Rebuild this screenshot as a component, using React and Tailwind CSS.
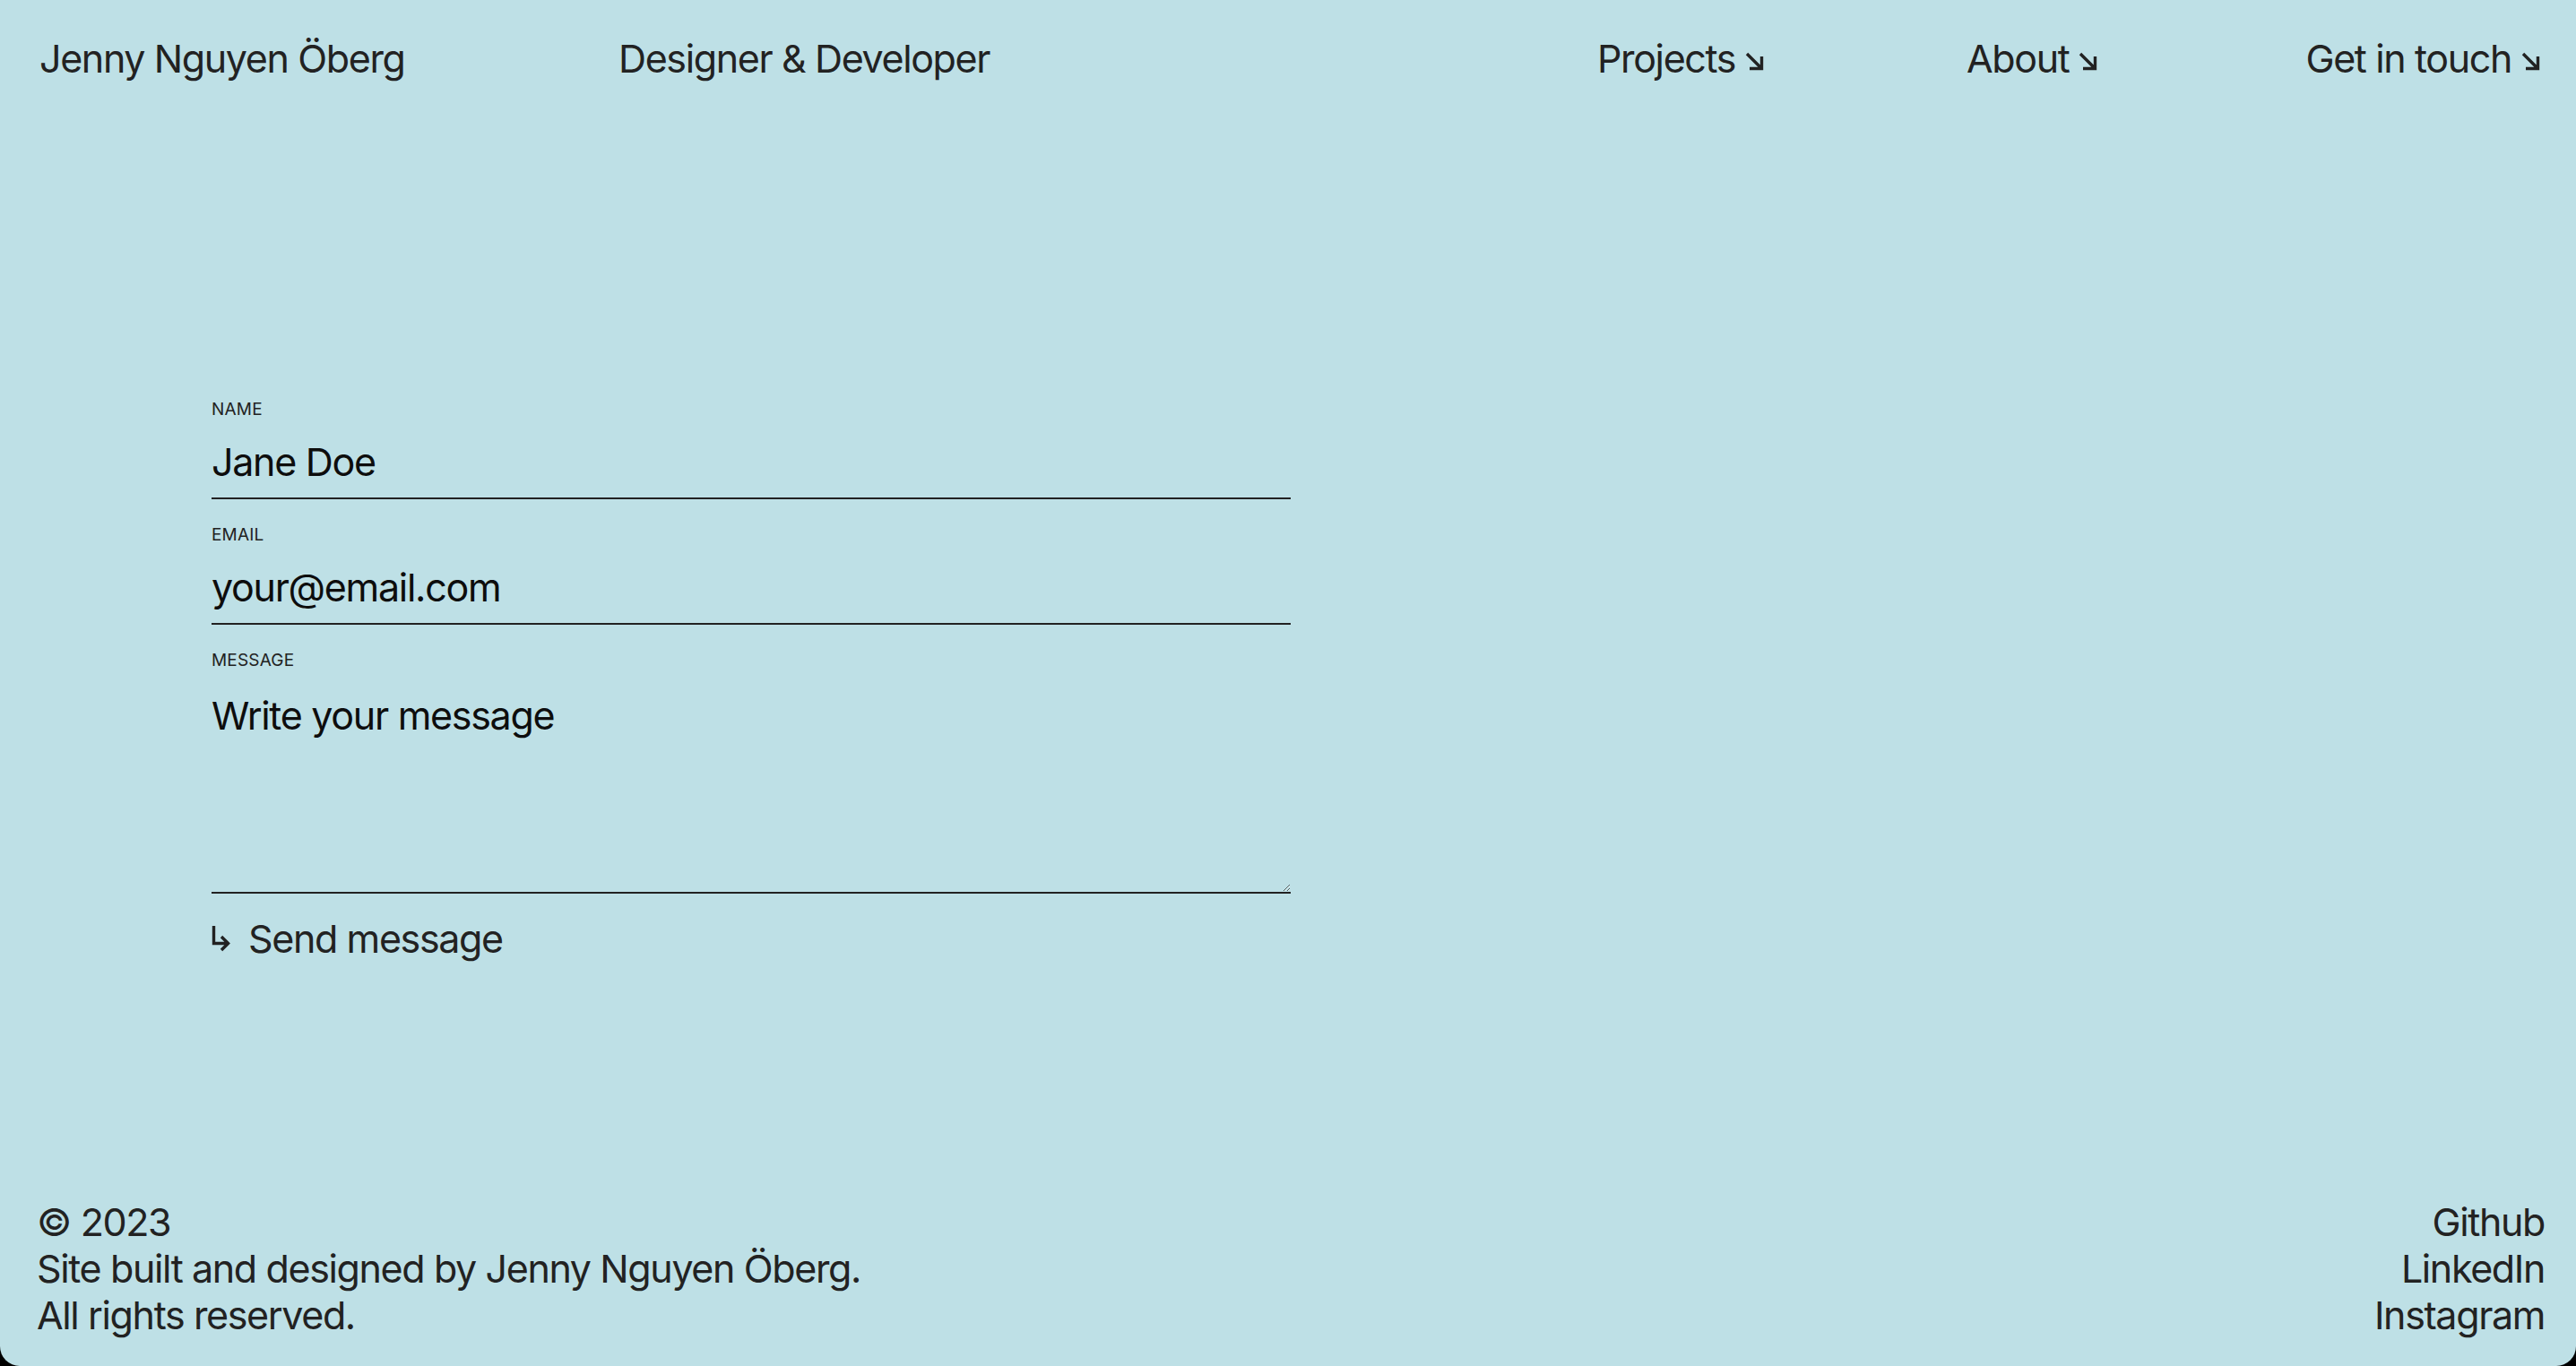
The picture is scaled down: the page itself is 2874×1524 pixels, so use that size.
import React from 'react';

// small diagonal arrow used after nav links
const ArrowDownRight = () => (
  <svg width="22" height="22" viewBox="0 0 22 22" fill="none" className="inline-block ml-[10px] mb-[2px]">
    <path d="M3 3 L18 18 M6 19.5 H19.5 V6" stroke="#222" strokeWidth="3.4" />
  </svg>
);

// hooked arrow in front of the submit button
const ReturnArrow = () => (
  <svg width="22" height="30" viewBox="0 0 22 30" fill="none" className="block mr-[19px] mb-[10px]">
    <path d="M2.5 0 V19.5 H18 M11 12 L18.5 19.5 L11 27" stroke="#222" strokeWidth="3.4" />
  </svg>
);

const Field = ({ label, children }) => (
  <label className="flex flex-col">
    <span className="text-[19px] leading-[23px] uppercase tracking-[0.01em] text-[#222]">{label}</span>
    {children}
  </label>
);

const inputClass =
  'mt-[21px] pb-[14px] bg-transparent border-b-2 border-[#222] outline-none placeholder:text-[#0d0d0d] leading-[52px] tracking-[-0.03em]';

export default function App() {
  return (
    <div className="bg-black">
      <div className="min-h-screen flex flex-col bg-[#bee0e6] text-[#222] rounded-b-[22px] font-['Inter','Liberation_Sans',sans-serif] text-[43px] leading-[52px] tracking-[-0.032em]">
        <header className="grid grid-cols-[646px_1092px_412px_1fr] pl-[44px] pr-[40px] pt-[39px]">
          <span>Jenny Nguyen Öberg</span>
          <span>Designer &amp; Developer</span>
          <a href="#projects">Projects<ArrowDownRight /></a>
          <div className="flex justify-between">
            <a href="#about">About<ArrowDownRight /></a>
            <a href="#contact">Get in touch<ArrowDownRight /></a>
          </div>
        </header>

        <main className="pl-[236px] pt-[354px]">
          <form className="w-[1204px] flex flex-col gap-[28px]" onSubmit={(e) => e.preventDefault()}>
            <Field label="Name">
              <input type="text" placeholder="Jane Doe" className={inputClass} />
            </Field>
            <Field label="Email">
              <input type="email" placeholder="your@email.com" className={inputClass} />
            </Field>
            <Field label="Message">
              <textarea
                placeholder="Write your message"
                className="mt-[21px] pt-[3px] h-[228px] bg-transparent border-b-2 border-[#222] outline-none placeholder:text-[#0d0d0d] leading-[52px] tracking-[-0.03em]"
              />
            </Field>
            <button type="submit" className="self-start mt-[-4px] flex items-end text-left leading-[52px] tracking-[-0.032em] cursor-pointer">
              <ReturnArrow />
              Send message
            </button>
          </form>
        </main>

        <footer className="mt-auto flex justify-between items-end pl-[41px] pr-[35px] pb-[31px]">
          <div>
            <p>© 2023</p>
            <p>Site built and designed by Jenny Nguyen Öberg.</p>
            <p>All rights reserved.</p>
          </div>
          <div className="flex flex-col items-end">
            <a href="#github">Github</a>
            <a href="#linkedin">LinkedIn</a>
            <a href="#instagram">Instagram</a>
          </div>
        </footer>
      </div>
    </div>
  );
}
